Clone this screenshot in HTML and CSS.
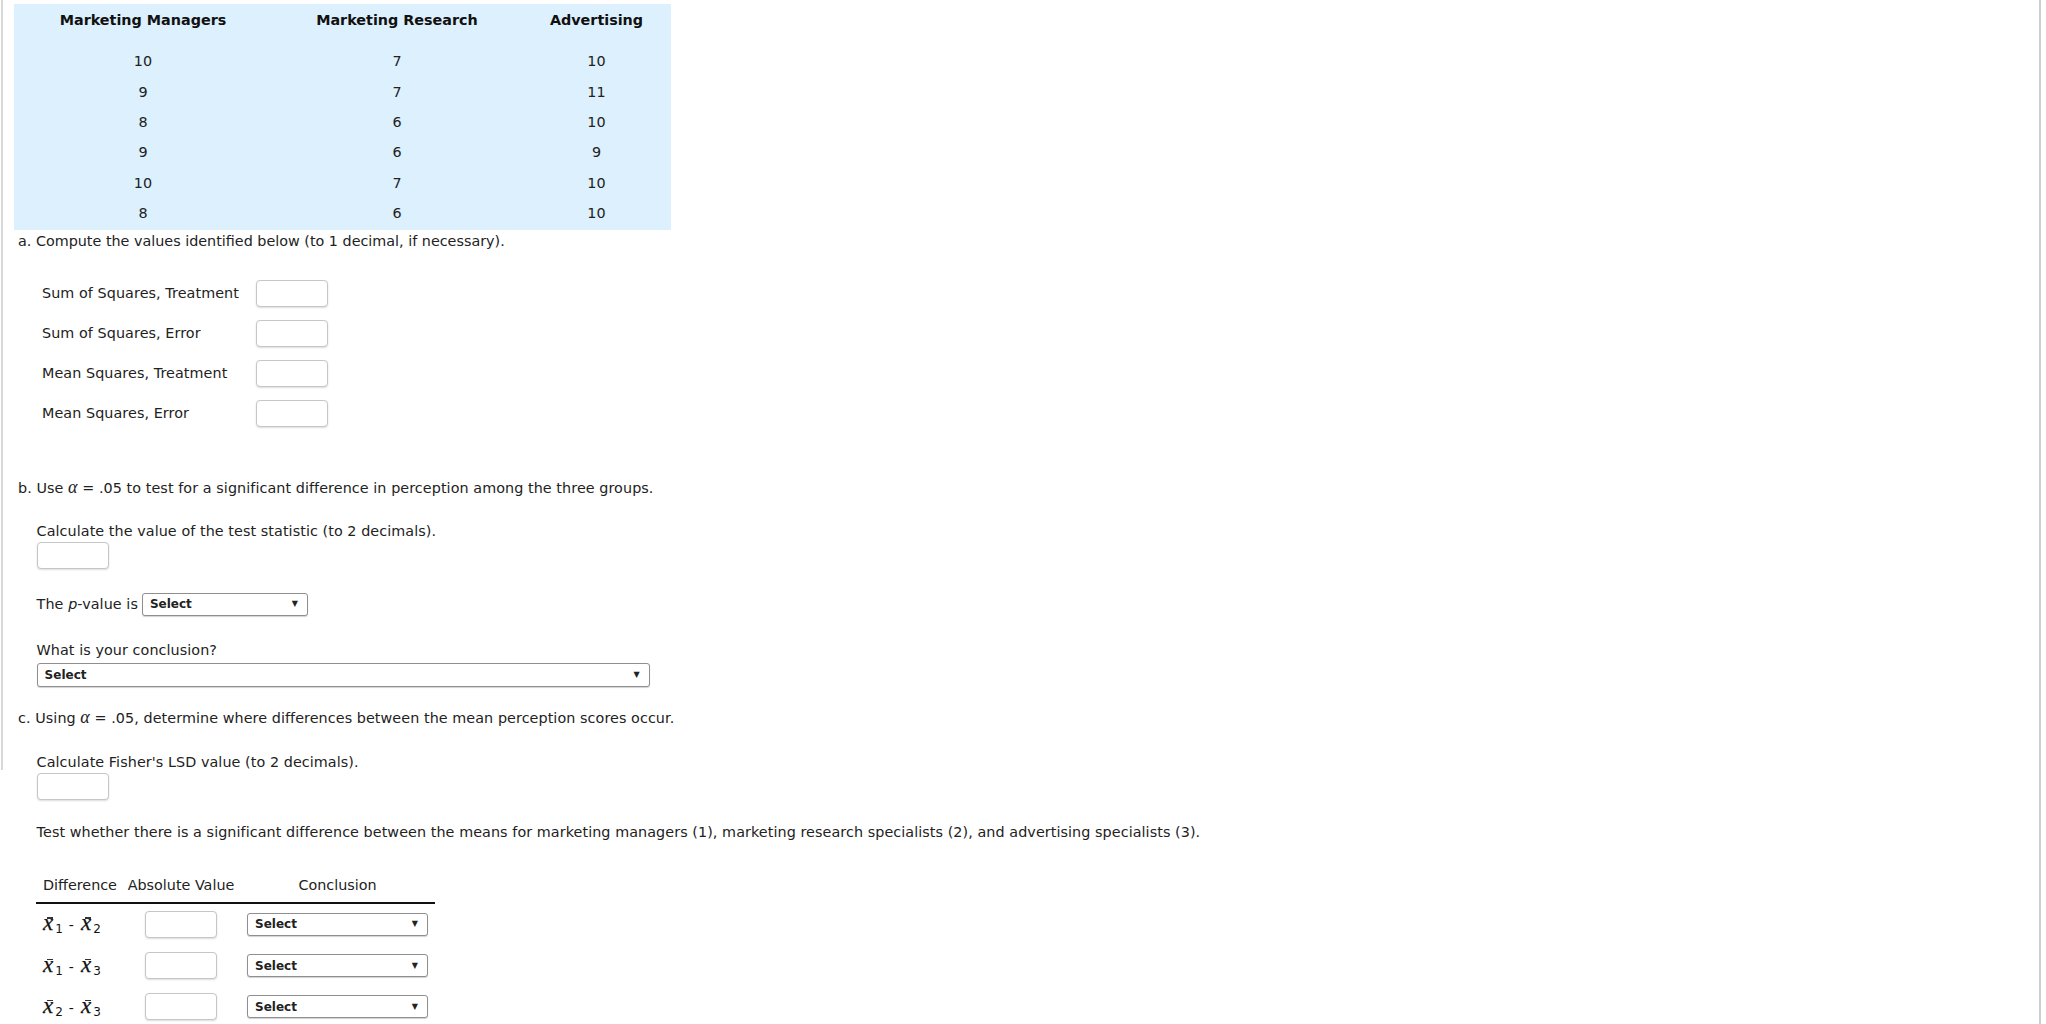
FILE: index.html
```html
<!DOCTYPE html>
<html>
<head>
<meta charset="utf-8">
<link rel="stylesheet" href="styles.css">
</head>
<body>
<div class="page">
  <div class="rule-left"></div>
  <div class="content">
    <div class="data-wrap">
      <table class="data">
        <colgroup><col class="c1"><col class="c2"><col class="c3"></colgroup>
        <thead>
          <tr><th>Marketing Managers</th><th>Marketing Research</th><th>Advertising</th></tr>
        </thead>
        <tbody>
          <tr><td>10</td><td>7</td><td>10</td></tr>
          <tr><td>9</td><td>7</td><td>11</td></tr>
          <tr><td>8</td><td>6</td><td>10</td></tr>
          <tr><td>9</td><td>6</td><td>9</td></tr>
          <tr><td>10</td><td>7</td><td>10</td></tr>
          <tr><td>8</td><td>6</td><td>10</td></tr>
        </tbody>
      </table>
    </div>

    <p class="part part-a">a. Compute the values identified below (to 1 decimal, if necessary).</p>

    <div class="fields">
      <div class="field"><span class="field-label">Sum of Squares, Treatment</span><span class="input"></span></div>
      <div class="field"><span class="field-label">Sum of Squares, Error</span><span class="input"></span></div>
      <div class="field"><span class="field-label">Mean Squares, Treatment</span><span class="input"></span></div>
      <div class="field"><span class="field-label">Mean Squares, Error</span><span class="input"></span></div>
    </div>

    <p class="part part-b">b. Use <span class="greek">α</span> = .05 to test for a significant difference in perception among the three groups.</p>

    <p class="sub calc-b">Calculate the value of the test statistic (to 2 decimals).</p>
    <span class="input block sub-input"></span>

    <div class="sub pval">
      <span>The <span class="ital">p</span>-value is</span>
      <span class="select sm"><span>Select</span><span class="arrow">▼</span></span>
    </div>

    <p class="sub concl">What is your conclusion?</p>
    <div class="sub select wide"><span>Select</span><span class="arrow">▼</span></div>

    <p class="part part-c">c. Using <span class="greek">α</span> = .05, determine where differences between the mean perception scores occur.</p>

    <p class="sub calc-c">Calculate Fisher's LSD value (to 2 decimals).</p>
    <span class="input block sub-input fisher-input"></span>

    <p class="sub test-line">Test whether there is a significant difference between the means for marketing managers (1), marketing research specialists (2), and advertising specialists (3).</p>

    <table class="diff">
      <colgroup><col class="d1"><col class="d2"><col class="d3"></colgroup>
      <thead>
        <tr><th class="left">Difference</th><th>Absolute Value</th><th>Conclusion</th></tr>
      </thead>
      <tbody>
        <tr>
          <td class="left"><span class="math"><span class="xbar">x</span><sub>1</sub><span class="minus">-</span><span class="xbar">x</span><sub>2</sub></span></td>
          <td><span class="input"></span></td>
          <td><span class="select mid"><span>Select</span><span class="arrow">▼</span></span></td>
        </tr>
        <tr>
          <td class="left"><span class="math"><span class="xbar">x</span><sub>1</sub><span class="minus">-</span><span class="xbar">x</span><sub>3</sub></span></td>
          <td><span class="input"></span></td>
          <td><span class="select mid"><span>Select</span><span class="arrow">▼</span></span></td>
        </tr>
        <tr>
          <td class="left"><span class="math"><span class="xbar">x</span><sub>2</sub><span class="minus">-</span><span class="xbar">x</span><sub>3</sub></span></td>
          <td><span class="input"></span></td>
          <td><span class="select mid"><span>Select</span><span class="arrow">▼</span></span></td>
        </tr>
      </tbody>
    </table>
  </div>
  <div class="rule-right"></div>
</div>
</body>
</html>
```

FILE: styles.css
```css
html, body {
  margin: 0;
  padding: 0;
  background: #ffffff;
}

body {
  font-family: "DejaVu Sans", Verdana, sans-serif;
  font-size: 14.35px;
  line-height: 18px;
  color: #222222;
}

.page {
  display: flex;
  min-height: 1024px;
}

.rule-left {
  flex: none;
  width: 2px;
  height: 770px;
  margin-left: 1px;
  background: #d8d8d8;
}

.content {
  flex: 1;
  padding-top: 4px;
}

.rule-right {
  flex: none;
  width: 2px;
  margin-right: 5px;
  background: #cdcdcd;
}

/* data table */
.data-wrap {
  margin-left: 11px;
  width: 657px;
  background: #dcf0fd;
  padding-bottom: 2px;
}

.data {
  width: 100%;
  border-collapse: collapse;
  table-layout: fixed;
}

.data .c1 { width: 258px; }
.data .c2 { width: 250px; }
.data .c3 { width: 149px; }

.data th {
  padding: 7px 0 17.35px;
  font-weight: bold;
  color: #111111;
  text-align: center;
  line-height: 18px;
}

.data td {
  height: 30.3px;
  padding: 0;
  text-align: center;
  vertical-align: middle;
}

/* paragraphs */
p {
  margin: 0;
}

.part {
  margin-left: 15px;
}

.part-b,
.part-c,
.sub,
.field-label {
  letter-spacing: 0.07px;
}

.part-a { margin-top: 1.7px; }
.part-b { margin-top: 45.7px; }
.part-c { margin-top: 22.3px; }

.greek {
  font-family: "Liberation Serif", "DejaVu Serif", serif;
  font-style: italic;
  font-size: 18px;
  line-height: 0;
}

.ital {
  font-style: italic;
}

.sub {
  margin-left: 33.6px;
}

/* part a fields */
.fields {
  margin: 23.3px 0 0 39px;
}

.field {
  display: flex;
  align-items: center;
  height: 40px;
}

.field-label {
  width: 214px;
  flex: none;
}

.input {
  display: inline-block;
  box-sizing: border-box;
  width: 72px;
  height: 27px;
  border: 1px solid #c6c6c6;
  border-radius: 4px;
  background: #ffffff;
  box-shadow: 0 1px 2px rgba(0, 0, 0, 0.14);
  vertical-align: middle;
}

.input.block {
  display: block;
}

.calc-b { margin-top: 25.5px; }

.sub-input {
  margin-top: 1.5px;
  margin-left: 33.6px;
}

.pval {
  display: flex;
  align-items: center;
  height: 23px;
  margin-top: 24px;
}

.select {
  display: inline-flex;
  align-items: center;
  justify-content: space-between;
  box-sizing: border-box;
  height: 23px;
  padding: 0 9px 0 7px;
  border: 1px solid #8f8f8f;
  border-radius: 3px;
  background: #ffffff;
  box-shadow: 0 1px 1px rgba(0, 0, 0, 0.18);
  font-size: 12px;
  font-weight: bold;
  letter-spacing: 0;
  color: #222222;
  vertical-align: middle;
}

.select .arrow {
  font-size: 8px;
  font-weight: normal;
  color: #222222;
}

.select.sm {
  width: 166px;
  margin-left: 4px;
}

.select.wide {
  display: flex;
  width: 613px;
  height: 24px;
  margin-top: 3.9px;
}

.select.mid {
  width: 181px;
}

.concl { margin-top: 25.1px; }

.calc-c { margin-top: 25.9px; }
.fisher-input { margin-top: 2px; }

.test-line { margin-top: 22.9px; }

/* difference table */
.diff {
  margin: 34.8px 0 0 33px;
  width: 399px;
  border-collapse: collapse;
  table-layout: fixed;
}

.diff .d1 { width: 86px; }
.diff .d2 { width: 118px; }
.diff .d3 { width: 195px; }

.diff th {
  padding: 0 0 8px;
  font-weight: normal;
  text-align: center;
  line-height: 18px;
  border-bottom: 2px solid #111111;
}

.diff th.left,
.diff td.left {
  text-align: left;
  padding-left: 7px;
}

.diff td {
  height: 41.3px;
  padding: 0;
  text-align: center;
  vertical-align: middle;
}

.math {
  font-family: "Liberation Serif", "DejaVu Serif", serif;
  font-style: italic;
  font-size: 23px;
  color: #111111;
  -webkit-text-stroke: 0.25px #111111;
  white-space: nowrap;
}

.math sub {
  font-family: "DejaVu Sans", sans-serif;
  font-style: normal;
  font-size: 12px;
  vertical-align: -3px;
  line-height: 0;
  -webkit-text-stroke: 0;
  margin-left: 2px;
}

.math .minus {
  font-family: "DejaVu Sans", sans-serif;
  font-style: normal;
  font-size: 14px;
  -webkit-text-stroke: 0;
  margin: 0 7px 0 6px;
}

.xbar {
  position: relative;
  display: inline-block;
}

.xbar::before {
  content: "";
  position: absolute;
  left: 4px;
  top: 3px;
  width: 6px;
  height: 1.5px;
  background: #333333;
}
```
